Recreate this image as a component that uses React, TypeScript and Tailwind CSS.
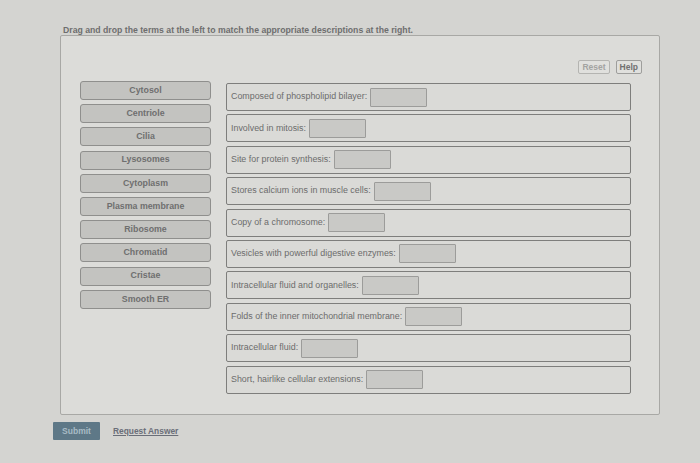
import React from "react";

const terms = [
  "Cytosol",
  "Centriole",
  "Cilia",
  "Lysosomes",
  "Cytoplasm",
  "Plasma membrane",
  "Ribosome",
  "Chromatid",
  "Cristae",
  "Smooth ER",
];

const descriptions = [
  "Composed of phospholipid bilayer",
  "Involved in mitosis",
  "Site for protein synthesis",
  "Stores calcium ions in muscle cells",
  "Copy of a chromosome",
  "Vesicles with powerful digestive enzymes",
  "Intracellular fluid and organelles",
  "Folds of the inner mitochondrial membrane",
  "Intracellular fluid",
  "Short, hairlike cellular extensions",
];

export default function App() {
  return (
    <div
      className="flex h-[463px] w-[700px] flex-col overflow-hidden bg-[#d4d4d1] pl-[60px]"
      style={{ fontFamily: '"Liberation Sans", Arial, sans-serif' }}
    >
      <p className="ml-[3px] mt-[25px] h-[10px] text-[8.7px] font-bold leading-[10px] text-[#6e6e6e]">
        Drag and drop the terms at the left to match the appropriate descriptions at the right.
      </p>

      <div className="mt-[0px] flex h-[380px] w-[600px] flex-col rounded-[2px] border border-[#a8a8a5] bg-[#dcdcd9] pl-[19px] pr-[17px] pt-[24px]">
        <div className="flex justify-end gap-[6px]">
          <button
            type="button"
            className="h-[14px] rounded-[2px] border border-[#b4b4b1] bg-[#e0e0dd] px-[3px] text-[8.5px] font-bold leading-[12px] text-[#a3a3a1]"
          >
            Reset
          </button>
          <button
            type="button"
            className="h-[14px] rounded-[2px] border border-[#9e9e9c] bg-[#e0e0dd] px-[3px] text-[8.5px] font-bold leading-[12px] text-[#707070]"
          >
            Help
          </button>
        </div>

        <div className="mt-[7px] flex gap-[15px]">
          <ol className="flex w-[131px] flex-col gap-[4.2px]">
            {terms.map((term) => (
              <li
                key={term}
                className="flex h-[19px] items-center justify-center rounded-[3px] border border-[#8f8f8d] bg-[#c3c3c0] text-[8.8px] font-bold text-[#6f6f6f]"
              >
                {term}
              </li>
            ))}
          </ol>

          <ol className="mt-[2px] flex w-[405px] flex-col gap-[3.4px]">
            {descriptions.map((desc) => (
              <li
                key={desc}
                className="flex h-[28px] items-center rounded-[2px] border-[1.5px] border-[#7e7e7c] bg-[#dadad7] pl-[4px]"
              >
                <span className="text-[8.9px] text-[#6c6c6c]">{desc}:</span>
                <span className="ml-[3px] h-[19px] w-[57px] rounded-[1px] border border-[#9c9c9a] bg-[#c9c9c6]" />
              </li>
            ))}
          </ol>
        </div>
      </div>

      <div className="mt-[7px] flex items-center gap-[13px]">
        <button
          type="button"
          className="-ml-[7px] h-[18px] w-[47px] rounded-[1px] bg-[#5e7887] text-[8.5px] font-bold text-[#a9bcc6]"
        >
          Submit
        </button>
        <a className="text-[8.4px] font-bold text-[#6a6e78] underline">Request Answer</a>
      </div>
    </div>
  );
}
